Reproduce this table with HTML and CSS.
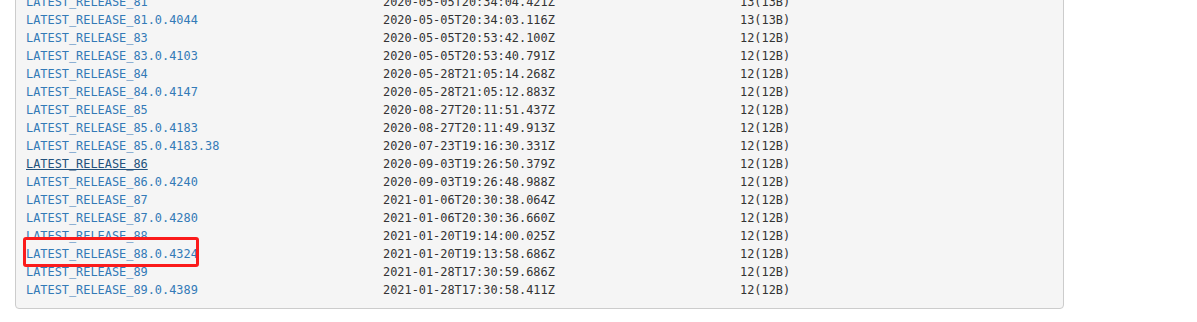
FILE: index.html
```html
<!DOCTYPE html>
<html>
<head>
<meta charset="utf-8">
<link rel="stylesheet" href="styles.css">
</head>
<body>
<div class="page">
  <div class="listing">
    <div class="row"><a class="name" href="#">LATEST_RELEASE_81</a><span>2020-05-05T20:34:04.421Z</span><span>13(13B)</span></div>
    <div class="row"><a class="name" href="#">LATEST_RELEASE_81.0.4044</a><span>2020-05-05T20:34:03.116Z</span><span>13(13B)</span></div>
    <div class="row"><a class="name" href="#">LATEST_RELEASE_83</a><span>2020-05-05T20:53:42.100Z</span><span>12(12B)</span></div>
    <div class="row"><a class="name" href="#">LATEST_RELEASE_83.0.4103</a><span>2020-05-05T20:53:40.791Z</span><span>12(12B)</span></div>
    <div class="row"><a class="name" href="#">LATEST_RELEASE_84</a><span>2020-05-28T21:05:14.268Z</span><span>12(12B)</span></div>
    <div class="row"><a class="name" href="#">LATEST_RELEASE_84.0.4147</a><span>2020-05-28T21:05:12.883Z</span><span>12(12B)</span></div>
    <div class="row"><a class="name" href="#">LATEST_RELEASE_85</a><span>2020-08-27T20:11:51.437Z</span><span>12(12B)</span></div>
    <div class="row"><a class="name" href="#">LATEST_RELEASE_85.0.4183</a><span>2020-08-27T20:11:49.913Z</span><span>12(12B)</span></div>
    <div class="row"><a class="name" href="#">LATEST_RELEASE_85.0.4183.38</a><span>2020-07-23T19:16:30.331Z</span><span>12(12B)</span></div>
    <div class="row"><a class="name hover" href="#">LATEST_RELEASE_86</a><span>2020-09-03T19:26:50.379Z</span><span>12(12B)</span></div>
    <div class="row"><a class="name" href="#">LATEST_RELEASE_86.0.4240</a><span>2020-09-03T19:26:48.988Z</span><span>12(12B)</span></div>
    <div class="row"><a class="name" href="#">LATEST_RELEASE_87</a><span>2021-01-06T20:30:38.064Z</span><span>12(12B)</span></div>
    <div class="row"><a class="name" href="#">LATEST_RELEASE_87.0.4280</a><span>2021-01-06T20:30:36.660Z</span><span>12(12B)</span></div>
    <div class="row"><a class="name" href="#">LATEST_RELEASE_88</a><span>2021-01-20T19:14:00.025Z</span><span>12(12B)</span></div>
    <div class="row marked"><a class="name" href="#">LATEST_RELEASE_88.0.4324</a><span>2021-01-20T19:13:58.686Z</span><span>12(12B)</span><span class="highlight"></span></div>
    <div class="row"><a class="name" href="#">LATEST_RELEASE_89</a><span>2021-01-28T17:30:59.686Z</span><span>12(12B)</span></div>
    <div class="row"><a class="name" href="#">LATEST_RELEASE_89.0.4389</a><span>2021-01-28T17:30:58.411Z</span><span>12(12B)</span></div>
  </div>
</div>
</body>
</html>
```

FILE: styles.css
```css
html, body {
  margin: 0;
  padding: 0;
  background: #ffffff;
}

.page {
  padding-left: 15px;
  overflow: hidden;
  height: 322px;
}

.listing {
  width: 1027px;
  margin-top: -17px;
  padding: 9px 10px 9px 10px;
  background: #f5f5f5;
  border: 1px solid #cccccc;
  border-radius: 4px;
  font-family: "DejaVu Sans Mono", "Liberation Mono", monospace;
  font-size: 11.9px;
  color: #333333;
}

.row {
  display: grid;
  grid-template-columns: 357px 357px auto;
  height: 18px;
  line-height: 18px;
  white-space: pre;
}

.name {
  color: #337ab7;
  text-decoration: none;
}

.name.hover {
  color: #23527c;
  text-decoration: underline;
}

.marked {
  position: relative;
}

.highlight {
  position: absolute;
  left: -3px;
  top: -8px;
  width: 170px;
  height: 24px;
  border: 3px solid #fb1b1b;
  border-radius: 3px;
}
```
